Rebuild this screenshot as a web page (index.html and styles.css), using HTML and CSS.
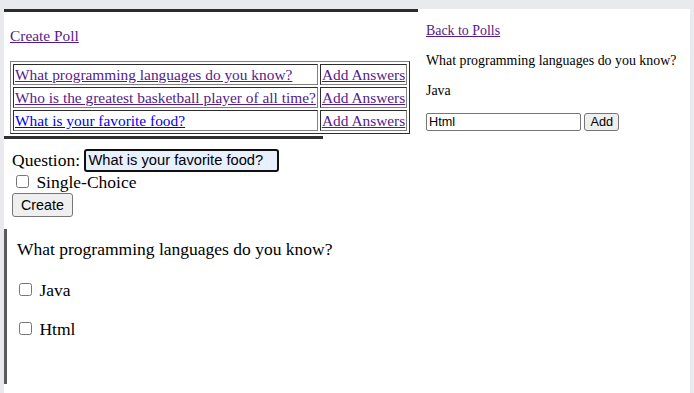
FILE: index.html
```html
<!DOCTYPE html>
<html lang="en">
<head>
    <meta charset="UTF-8">
    <meta name="viewport" content="width=device-width, initial-scale=1.0">
    <link rel="stylesheet" href="styles.css">
</head>
<body>
    <div class="page">
        <div class="main">
            <div class="polls">
                <p class="create-link"><a href="#" class="visited">Create Poll</a></p>
                <table class="poll-table">
                    <tr>
                        <td><a href="#" class="visited">What programming languages do you know?</a></td>
                        <td><a href="#" class="visited">Add Answers</a></td>
                    </tr>
                    <tr>
                        <td><a href="#" class="visited">Who is the greatest basketball player of all time?</a></td>
                        <td><a href="#" class="visited">Add Answers</a></td>
                    </tr>
                    <tr>
                        <td><a href="#" class="fresh">What is your favorite food?</a></td>
                        <td><a href="#" class="visited">Add Answers</a></td>
                    </tr>
                </table>
            </div>

            <div class="create-form">
                <div class="form-row">Question: <input type="text" class="question-input" value="What is your favorite food?"></div>
                <div class="form-row"><input type="checkbox" class="check"> Single-Choice</div>
                <div class="form-row"><button class="btn create-btn">Create</button></div>
            </div>

            <div class="answers">
                <p>What programming languages do you know?</p>
                <p class="answer"><input type="checkbox" class="check answer-check"> Java</p>
                <p class="answer"><input type="checkbox" class="check answer-check"> Html</p>
            </div>
        </div>

        <div class="detail">
            <p><a href="#" class="visited">Back to Polls</a></p>
            <p>What programming languages do you know?</p>
            <p>Java</p>
            <div class="add-row"><input type="text" class="answer-input" value="Html"> <button class="btn add-btn">Add</button></div>
        </div>
    </div>
</body>
</html>
```

FILE: styles.css
```css
body {
    margin: 0;
    padding: 0;
    background-color: #e9eaed; /* browser grey round the page */
    font-family: "Liberation Serif", "Times New Roman", serif;
    color: #000;
}

.page {
    display: flex;
    margin: 9px 4px 0 4px;
    min-height: calc(100vh - 9px);
    background-color: #fff;
}

a.visited {
    color: #551a8b;
}

a.fresh {
    color: #0000ee;
}

.main {
    width: 414px;
}

/* list of polls */
.polls {
    border-top: 3px solid #2b2b2b;
    padding: 0 0 2px 6px;
    font-size: 15.4px;
}

.create-link {
    margin: 15.4px 0;
}

.poll-table {
    border: 1px outset #808080;
    border-spacing: 2px;
    font-size: 15.4px;
}

.poll-table td {
    border: 1px inset #808080;
    padding: 1px;
    line-height: 17px;
}

/* create poll form */
.create-form {
    box-sizing: border-box;
    width: 319px;
    border-top: 3px solid #2f2f2f;
    padding: 10px 0 12px 8px;
    font-size: 17.5px;
}

.question-input {
    box-sizing: border-box;
    width: 195px;
    height: 23px;
    padding: 0 2px;
    border: 2px solid #101010;
    border-radius: 3px;
    background-color: #e8f0fe;
    font-family: "Liberation Sans", Arial, sans-serif;
    font-size: 14.7px;
    color: #000;
    outline: none;
}

.check {
    width: 13px;
    height: 13px;
    margin: 3px 3px 3px 4px;
}

.btn {
    background-color: #efefef;
    border: 1px solid #767676;
    border-radius: 3px;
    font-family: "Liberation Sans", Arial, sans-serif;
    color: #000;
}

.create-btn {
    font-size: 14.3px;
    padding: 3px 8px;
}

/* answers of the selected poll */
.answers {
    border-left: 3px solid #5a5a5a;
    padding: 10px 0 26px 10px;
    font-size: 17.5px;
}

.answers p {
    margin: 0 0 20px 0;
}

.answers .answer {
    margin-bottom: 18px;
}

.answer-check {
    margin-left: 2px;
}

/* right side panel */
.detail {
    flex: 1;
    padding-left: 8px;
    font-size: 13.9px;
}

.detail p {
    margin: 13.9px 0;
}

.answer-input {
    box-sizing: border-box;
    width: 155px;
    height: 18px;
    padding: 0 2px;
    border: 1px solid #767676;
    border-radius: 2px;
    font-family: "Liberation Sans", Arial, sans-serif;
    font-size: 12.7px;
    color: #000;
}

.add-btn {
    font-size: 12.7px;
    height: 18px;
    padding: 0 5px;
}
```
